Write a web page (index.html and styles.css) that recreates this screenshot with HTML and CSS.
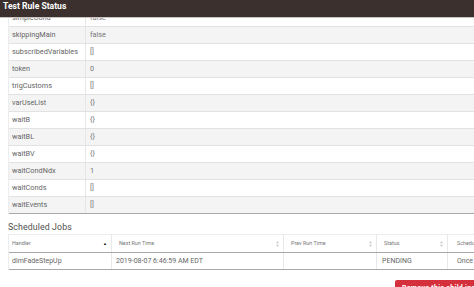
FILE: index.html
```html
<!DOCTYPE html>
<html>
<head>
<meta charset="utf-8">
<link rel="stylesheet" href="styles.css">
</head>
<body>
<header class="topbar"><span class="title">Test Rule Status</span></header>
<main class="content">
  <div class="kv">
    <div class="row"><div class="k">simpleCond</div><div class="v">false</div></div>
    <div class="row alt"><div class="k">skippingMain</div><div class="v">false</div></div>
    <div class="row"><div class="k">subscribedVariables</div><div class="v">[]</div></div>
    <div class="row alt"><div class="k">token</div><div class="v">0</div></div>
    <div class="row"><div class="k">trigCustoms</div><div class="v">[]</div></div>
    <div class="row alt"><div class="k">varUseList</div><div class="v">{}</div></div>
    <div class="row"><div class="k">waitB</div><div class="v">{}</div></div>
    <div class="row alt"><div class="k">waitBL</div><div class="v">{}</div></div>
    <div class="row"><div class="k">waitBV</div><div class="v">{}</div></div>
    <div class="row alt"><div class="k">waitCondNdx</div><div class="v">1</div></div>
    <div class="row"><div class="k">waitConds</div><div class="v">[]</div></div>
    <div class="row alt last"><div class="k">waitEvents</div><div class="v">[]</div></div>
  </div>
  <h2 class="section">Scheduled Jobs</h2>
  <div class="jobs">
    <div class="jrow jhead">
      <div class="jc">Handler<span class="sort active">&#9650;</span></div>
      <div class="jc">Next Run Time<span class="sort"><svg width="3" height="6" viewBox="0 0 3 6"><path d="M1.5 0L3 2.3H0z M1.5 6L3 3.7H0z" fill="#c8c8c8"/></svg></span></div>
      <div class="jc">Prev Run Time<span class="sort"><svg width="3" height="6" viewBox="0 0 3 6"><path d="M1.5 0L3 2.3H0z M1.5 6L3 3.7H0z" fill="#c8c8c8"/></svg></span></div>
      <div class="jc">Status<span class="sort"><svg width="3" height="6" viewBox="0 0 3 6"><path d="M1.5 0L3 2.3H0z M1.5 6L3 3.7H0z" fill="#c8c8c8"/></svg></span></div>
      <div class="jc">Schedule<span class="sort"><svg width="3" height="6" viewBox="0 0 3 6"><path d="M1.5 0L3 2.3H0z M1.5 6L3 3.7H0z" fill="#c8c8c8"/></svg></span></div>
    </div>
    <div class="jrow jdata">
      <div class="jc">dimFadeStepUp</div>
      <div class="jc">2019-08-07 6:46:59 AM EDT</div>
      <div class="jc"></div>
      <div class="jc">PENDING</div>
      <div class="jc">Once</div>
    </div>
  </div>
  <div class="actions"><button class="remove">Remove this child instance</button></div>
</main>
</body>
</html>
```
FILE: styles.css
```css
html, body {
  margin: 0;
  padding: 0;
  background: #fff;
  overflow: hidden;
  width: 474px;
  height: 287px;
}
body {
  font-family: Roboto, "Liberation Sans", sans-serif;
  color: #666;
}
.topbar {
  height: 17px;
  background: #3b302d;
  border-bottom: 1px solid #c9c4c2;
  display: flex;
  align-items: flex-start;
  padding-left: 3px;
  position: relative;
  z-index: 2;
}
.title {
  color: #fff;
  font-weight: 700;
  font-size: 8.6px;
  line-height: 13px;
}
.content {
  padding-left: 8px;
  width: 620px;
  overflow: hidden;
}
.kv {
  margin-top: -8px;
  border-left: 1px solid #ececec;
}
.row {
  display: grid;
  grid-template-columns: 77px 1fr;
  height: 17px;
  box-sizing: border-box;
  border-bottom: 1px solid #e2e2e2;
  font-size: 7.3px;
  line-height: 16px;
}
.row.alt { background: #f4f4f4; }
.row.last { border-bottom: 1px solid #a9a9a9; }
.k {
  padding-left: 3px;
  border-right: 1px solid #e6e6e6;
}
.v { padding-left: 4px; color: #777; }
.section {
  margin: 7px 0 0 0;
  font-size: 8.8px;
  font-weight: 400;
  line-height: 12px;
  color: #4f4f4f;
  height: 13px;
  letter-spacing: 0.1px;
}
.jobs {
  border-top: 1px solid #ececec;
  border-left: 1px solid #ececec;
}
.jrow {
  display: grid;
  grid-template-columns: 103px 172px 93px 71px 80px;
  box-sizing: border-box;
}
.jhead {
  height: 18px;
  border-bottom: 1px solid #a8a8a8;
  font-size: 5.4px;
  line-height: 17px;
  color: #777;
}
.jdata {
  height: 17px;
  border-bottom: 1px solid #a8a8a8;
  font-size: 7px;
  line-height: 16px;
  color: #666;
}
.jc {
  border-right: 1px solid #e8e8e8;
  padding-left: 3px;
  display: flex;
  align-items: center;
  justify-content: space-between;
  padding-right: 4px;
  white-space: nowrap;
}
.jhead .jc:not(:first-child) { padding-left: 7px; }
.jdata .jc:nth-child(2) { padding-left: 4px; }
.jdata .jc:nth-child(4) { padding-left: 5px; }
.jdata .jc:nth-child(5) { padding-left: 9px; }
.jhead .jc:nth-child(5) { padding-left: 9px; }
.sort { display: flex; align-items: center; }
.sort.active { font-size: 4px; color: #111; }
.actions {
  padding-left: 387px;
  padding-top: 10px;
}
.remove {
  display: block;
  background: #d5313d;
  color: #fff;
  border: none;
  font-family: Roboto, "Liberation Sans", sans-serif;
  font-weight: 700;
  font-size: 7px;
  line-height: 9px;
  padding: 4px 7px;
  border-radius: 2px;
  white-space: nowrap;
  letter-spacing: 0.3px;
}
```
